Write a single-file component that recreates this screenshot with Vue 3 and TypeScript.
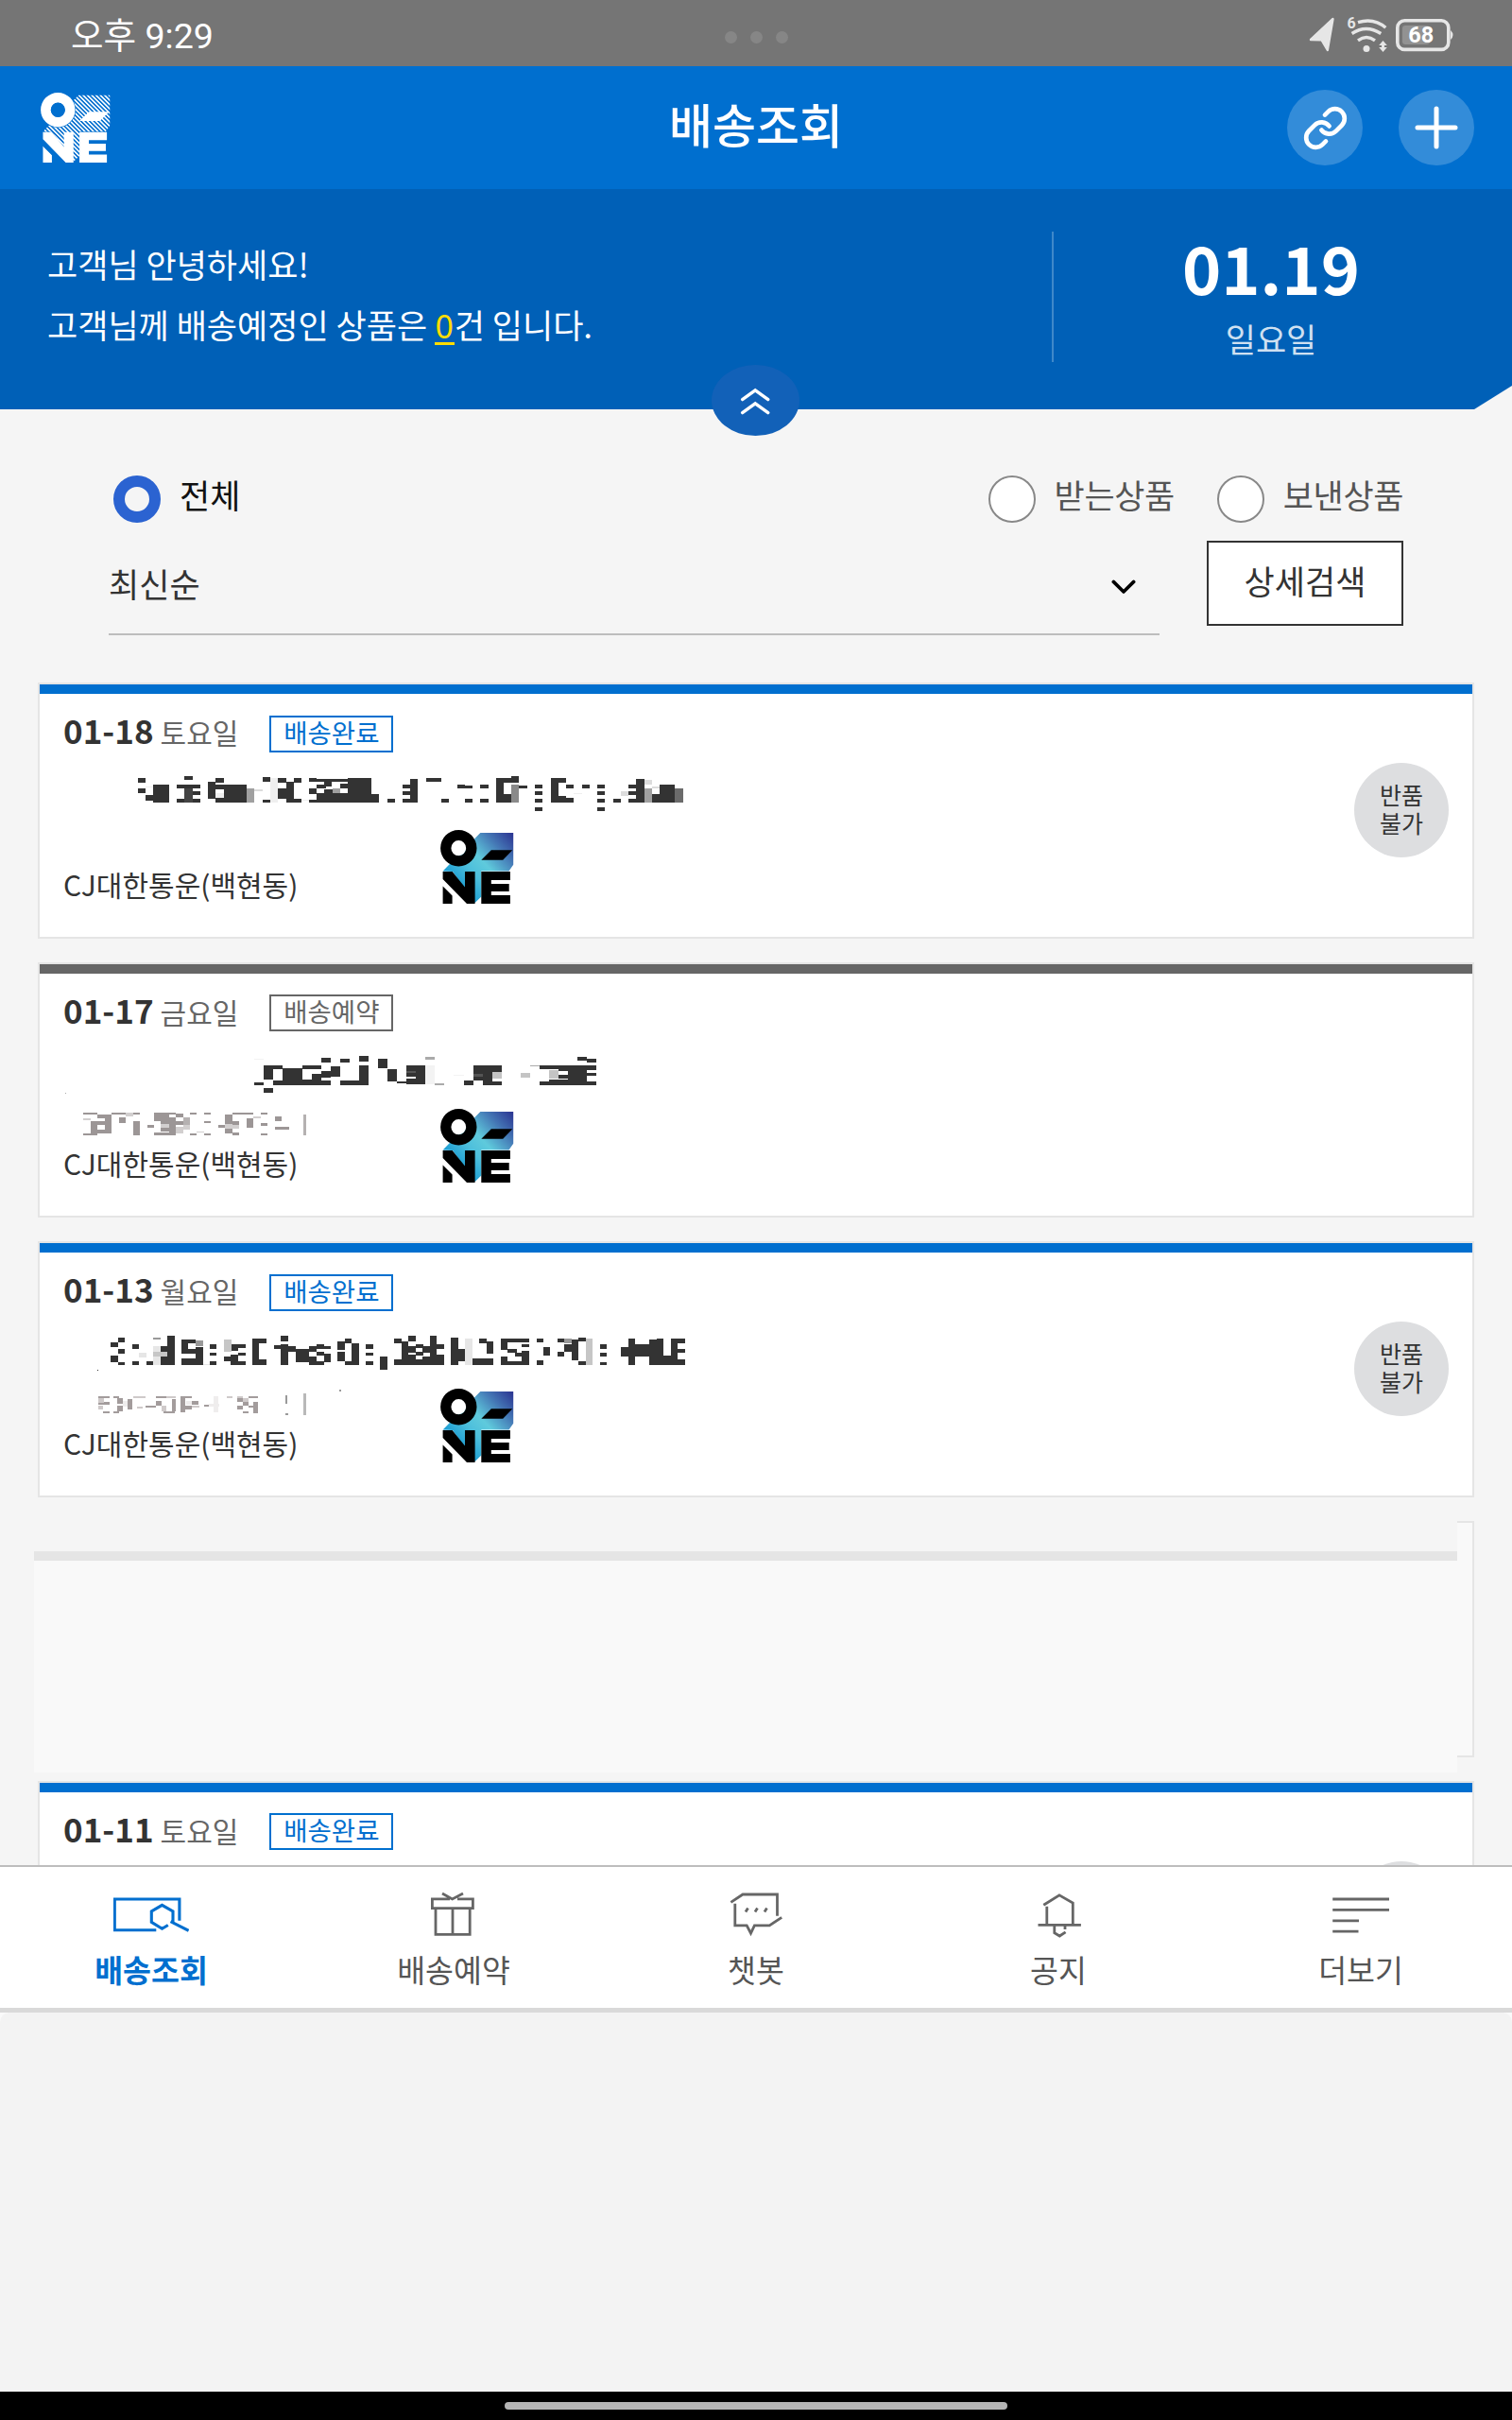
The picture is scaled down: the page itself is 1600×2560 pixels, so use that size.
<script setup lang="ts">
interface Shade {
  fill: string
  rects: number[][]
}
interface Mosaic {
  viewBox: string
  shades: Shade[]
}
interface Parcel {
  date: string
  weekday: string
  status: string
  tone: 'done' | 'booked'
  height: number
  carrier?: string
  noReturn?: string[]
  title?: Mosaic
  serial?: Mosaic
  blank?: boolean
  raised?: boolean
}

const CARRIER = 'CJ대한통운(백현동)'

const toPath = (rects: number[][]): string =>
  rects.map(([x, y, w, h]) => `M${x} ${y}h${w}v${h}h${-w}z`).join('')

const titleA: Mosaic = {
  viewBox: '77.35 321 1379.9 141',
  shades: [
    { fill: '#333', rects: [
      [243,339,16,14],[243,372,16,14],[259,393,18,19],[276,361,36,21],[276,381,36,36],[345,332,19,14],[328,359,53,13],[364,381,17,12],[364,405,17,12],[328,405,17,12],
      [397,352,17,53],[414,339,19,14],[414,359,19,16],[433,359,50,58],[414,402,19,15],[518,337,17,15],[518,407,17,10],[552,340,18,14],[552,372,18,33],[570,352,17,65],[587,339,17,15],[587,405,17,12],
      [621,339,17,13],[638,342,69,9],[621,372,17,18],[638,359,20,13],[655,349,17,16],[621,407,17,10],[638,388,37,29],[655,375,18,20],[690,357,17,15],[673,388,34,29],[707,339,52,78],[759,390,17,27],
      [794,405,17,12],[828,359,17,13],[845,342,17,75],[828,381,17,12],[828,405,17,12],[880,339,34,12],[914,405,17,12],[949,359,17,12],[966,364,17,8],[966,405,17,12],[999,359,19,13],[999,405,19,12],
      [1035,340,17,77],[1052,340,34,13],[1068,332,18,10],[1052,390,16,27],[1086,364,18,8],[1121,359,16,12],[1121,381,16,12],[1121,405,16,12],[1121,432,16,12],
      [1156,339,17,78],[1173,339,17,14],[1173,395,17,22],[1190,359,17,13],[1190,402,16,15],[1225,361,17,10],[1259,359,16,12],[1259,381,16,12],[1259,405,16,12],[1259,432,16,12],[1294,405,17,12],
      [1328,361,17,12],[1328,381,17,12],[1328,405,17,12],[1345,342,18,75],[1380,390,17,27],[1397,361,33,56] ] },
    { fill: '#444', rects: [[345,372,19,45]] },
    { fill: '#6b6b6b', rects: [[1430,372,19,45]] },
    { fill: '#8a8a8a', rects: [[1068,360,18,57]] },
    { fill: '#a0a0a0', rects: [[483,373,17,44],[673,372,17,16],[1363,372,17,45]] },
    { fill: '#dcdcdc', rects: [[500,374,18,8],[1311,381,17,14],[1363,345,17,16],[1380,366,17,6]] },
    { fill: '#efefef', rects: [[535,340,17,77],[414,387,19,15],[259,367,17,2],[604,409,17,2],[1206,387,19,2]] },
  ],
}
const titleB: Mosaic = {
  viewBox: '77.35 309 1379.9 141',
  shades: [
    { fill: '#333', rects: [
      [500,405,21,8],[521,350,20,45],[521,424,20,14],[541,350,21,13],[541,400,21,14],[562,359,44,55],[606,350,42,14],[606,395,21,19],[627,378,21,36],[648,328,21,13],[648,368,21,22],[648,400,21,14],
      [669,355,21,33],[690,330,21,13],[690,400,42,14],[732,321,21,17],[732,350,21,64],[774,330,20,30],[794,362,21,40],[815,402,21,6],[836,352,42,16],[836,376,42,12],[836,392,42,20],[857,352,21,60],
      [964,400,21,14],[985,352,62,26],[985,386,21,14],[1006,378,20,36],[1026,402,21,12],[1131,352,42,10],[1131,402,42,12],[1173,352,21,17],[1173,380,21,12],[1152,396,42,18],[1194,350,42,64],
      [1215,324,21,11],[1236,330,20,11],[1236,352,20,13],[1236,374,20,11],[1236,402,20,12] ] },
    { fill: '#555', rects: [[985,378,21,8],[836,368,21,8]] },
    { fill: '#aaa', rects: [[878,324,21,9],[899,407,21,6],[1110,350,21,4],[82,438,2,3]] },
    { fill: '#c4c4c4', rects: [[1089,375,21,14],[1152,366,21,26],[1026,372,21,20]] },
    { fill: '#f3f3f3', rects: [[878,350,21,62],[941,381,23,3],[500,330,21,3]] },
  ],
}
const serialB: Mosaic = {
  viewBox: '77.35 474 627.2 108',
  shades: [
    { fill: '#9c9696', rects: [
      [121,500,32,7],[153,508,32,10],[137,527,16,13],[169,518,16,50],[121,566,16,7],[137,540,16,33],[153,527,16,14],[153,556,16,10],[185,500,30,7],[201,515,14,20],[232,500,15,7],[232,527,15,46],
      [263,541,15,8],[278,500,48,8],[278,508,15,20],[293,508,18,28],[311,515,15,24],[278,563,33,10],[293,550,18,10],[311,541,15,32],[326,505,16,10],[326,528,16,12],[357,500,15,7],[357,566,15,7],[388,500,15,7],[388,527,15,8],[388,566,15,7],
      [420,541,15,9],[435,508,16,30],[435,552,16,14],[451,500,15,8],[451,527,15,12],[451,563,15,10],[466,500,32,7],[483,520,15,30],[514,500,15,7],[514,534,15,8],[514,566,15,7],[546,514,15,14],[546,546,31,8] ] },
    { fill: '#d2cfcf', rects: [[121,520,16,6],[215,500,17,14],[293,538,18,12],[326,545,16,22],[342,540,15,16],[435,538,16,14],[451,541,15,12],[498,514,16,5],[372,561,16,3]] },
    { fill: '#b5b1b1', rects: [[342,515,15,24],[608,507,7,66]] },
  ],
}
const titleC: Mosaic = {
  viewBox: '77.35 324 1379.9 141',
  shades: [
    { fill: '#333', rects: [
      [182,359,17,17],[182,402,17,20],[199,345,14,15],[199,380,14,15],[199,422,14,10],[230,366,15,15],[230,420,15,12],[261,420,16,12],[293,372,17,60],[307,339,17,93],[339,350,15,45],[354,350,17,14],[371,375,15,57],[354,382,17,13],[339,412,32,20],
      [401,366,16,14],[401,393,16,10],[401,420,16,12],[448,366,17,20],[433,405,17,15],[448,400,17,32],[465,366,16,12],[465,393,16,10],[465,420,16,12],[495,348,16,84],[511,348,16,16],[511,415,16,17],
      [544,370,14,12],[558,339,17,18],[558,366,17,66],[575,373,16,18],[591,380,30,42],[621,373,17,18],[621,405,17,27],[638,366,16,14],[654,372,15,10],[638,390,16,12],[654,395,15,27],[638,420,16,12],
      [684,357,16,26],[684,391,16,28],[700,348,16,14],[716,362,16,70],[700,420,16,12],[746,366,17,14],[746,393,17,10],[746,420,17,12],[778,405,16,42],
      [809,348,16,14],[825,357,15,75],[809,415,16,17],[840,339,17,18],[840,372,17,20],[840,400,17,32],[857,366,17,12],[857,390,17,12],[857,415,17,17],[889,339,15,93],[872,372,17,20],[872,405,17,27],[904,366,15,14],[904,398,15,34],
      [935,345,16,87],[951,380,14,40],[983,412,46,20],[1013,357,16,38],[998,348,16,14],[1045,348,16,36],[1061,348,47,13],[1061,380,20,12],[1077,392,15,12],[1092,388,16,44],[1045,405,16,27],[1061,420,31,12],[1092,366,16,10],
      [1124,348,15,12],[1124,418,15,14],[1139,375,15,28],[1171,348,15,12],[1186,366,16,24],[1202,352,15,66],[1217,345,16,12],[1217,420,16,12],[1171,390,15,14],[1264,366,16,14],[1264,393,16,12],[1264,422,16,10],
      [1311,376,17,28],[1328,348,14,84],[1342,366,32,38],[1374,352,16,80],[1390,348,16,84],[1406,402,28,30],[1421,348,15,84],[1436,348,17,14],[1436,380,17,14],[1436,415,17,17],[152,447,3,3] ] },
    { fill: '#999', rects: [[276,345,17,7],[371,355,15,18],[1186,348,16,14]] },
    { fill: '#c6c6c6', rects: [[433,350,17,40],[1233,348,15,84],[276,390,31,16]] },
    { fill: '#e6e6e6', rects: [[276,372,17,18],[276,406,17,26],[245,393,16,15],[966,348,17,84],[386,428,15,3]] },
  ],
}
const serialC: Mosaic = {
  viewBox: '77.35 489 627.2 108',
  shades: [
    { fill: '#a39c9c', rects: [
      [155,531,25,7],[155,550,25,8],[197,538,12,18],[197,560,12,18],[188,531,12,7],[165,578,14,6],[188,578,12,6],[220,540,11,32],[260,560,22,7],[282,531,24,6],[282,546,12,14],[318,540,9,38],[300,578,25,6],
      [337,531,10,52],[347,531,15,7],[347,560,15,12],[362,545,14,12],[388,558,11,6],[463,538,12,12],[463,560,12,12],[475,550,12,10],[475,578,12,6],[487,531,20,7],[497,550,10,34],[487,560,10,8] ] },
    { fill: '#cfcaca', rects: [[155,538,12,14],[155,562,10,12],[232,531,28,6],[240,565,12,6],[294,560,12,18],[306,531,20,7],[362,560,16,8],[438,531,14,6],[463,531,12,6],[475,538,12,10]] },
    { fill: '#efeded', rects: [[410,531,10,50],[400,556,22,8],[350,545,12,12],[209,545,10,20]] },
    { fill: '#9a9a9a', rects: [[569,528,3,28],[568,584,6,6],[687,510,6,5]] },
    { fill: '#b9b9b9', rects: [[608,522,7,68]] },
  ],
}

const parcels: Parcel[] = [
  { date: '01-18', weekday: '토요일', status: '배송완료', tone: 'done', height: 271, carrier: CARRIER, noReturn: ['반품', '불가'], title: titleA },
  { date: '01-17', weekday: '금요일', status: '배송예약', tone: 'booked', height: 270, carrier: CARRIER, title: titleB, serial: serialB, raised: true },
  { date: '01-13', weekday: '월요일', status: '배송완료', tone: 'done', height: 271, carrier: CARRIER, noReturn: ['반품', '불가'], title: titleC, serial: serialC },
  { date: '', weekday: '', status: '', tone: 'done', height: 250, blank: true },
  { date: '01-11', weekday: '토요일', status: '배송완료', tone: 'done', height: 271, noReturn: [], raised: true },
]

const tabs = [
  { label: '배송조회', active: true, viewBox: '120 2000 80 50',
    d: 'M189.9 2031.7V2009H121.3V2041.7H165.3M177.8 2036.5L171.5 2040.3L160.3 2033.3V2022L171.5 2015.3L183 2022V2033.5M180.5 2032.7L199.6 2042.3' },
  { label: '배송예약', active: false, viewBox: '440 2000 80 50',
    d: 'M468 2003L478.6 2009L490 2003M484 2008.8H500.4V2018.6H457.4V2008.8H476M461 2018.6V2046.4H497.2V2018.6M479 2018.6V2046.4' },
  { label: '챗봇', active: false, viewBox: '760 2000 80 50',
    d: 'M773.4 2012.3L786 2004H822.5V2026.7M827.2 2028.3L814.3 2036.8H798.4L794.5 2045L790.2 2036.8H777.8V2013.7M789 2022.5L791.5 2018.5M799 2022.5L801.5 2018.5M809 2022.5L811.5 2018.5' },
  { label: '공지', active: false, viewBox: '1080 2000 80 50',
    d: 'M1104.3 2015.3L1121 2004.9L1135.3 2013V2036M1107.8 2016.7V2036M1098.5 2036.3H1143.9M1115.8 2037V2044.7L1121.3 2048L1127.6 2043.8M1127 2037V2041' },
  { label: '더보기', active: false, viewBox: '1400 2000 80 50',
    d: 'M1410.2 2009H1470M1410.2 2020.3H1470M1410.2 2031.8H1438M1410.2 2043.2H1437.5' },
]
</script>

<template>
  <div class="screen">
    <svg class="defs" width="0" height="0">
      <defs>
        <linearGradient id="oneTint" gradientUnits="userSpaceOnUse" x1="77" y1="3" x2="12" y2="62">
          <stop offset="0" stop-color="#2b3391" />
          <stop offset=".25" stop-color="#4579b6" />
          <stop offset=".5" stop-color="#5fcadc" />
          <stop offset=".68" stop-color="#4dbfdc" />
          <stop offset="1" stop-color="#0b92d0" />
        </linearGradient>
        <pattern id="oneHatch" width="3.4" height="3.4" patternUnits="userSpaceOnUse" patternTransform="rotate(-45)">
          <rect width="1.7" height="3.4" fill="#fff" />
        </pattern>
        <symbol id="oneShadow" viewBox="0 0 78 78">
          <path d="M2.6 43.5L42.3 3H77.2V36.7L72.5 43.6H43.3V70.5L36.6 77L13 44Z" />
        </symbol>
        <symbol id="oneMark" viewBox="0 0 78 78">
          <path fill-rule="evenodd" d="M19.3 0A19.2 19.2 0 0 1 19.3 38.4A19.2 19.2 0 0 1 19.3 0ZM19.3 11.1A7.9 8.1 0 0 0 19.3 27.3A7.9 8.1 0 0 0 19.3 11.1Z" />
          <path d="M53.8 21.3H76.3L66.2 31.7H43.3Z" />
          <path d="M2.6 44H12.6L26 60.5V44H36.6V78H28L2.6 52ZM2.6 59.5L12.6 69.5V78H2.6Z" />
          <path d="M43.3 44H73.9V53H53.8V57H72.7V65H53.8V69H73.9V78H43.3Z" />
        </symbol>
      </defs>
    </svg>

    <header class="status">
      <span class="clock">오후 9:29</span>
      <span class="dots"><i /><i /><i /></span>
      <svg class="sys" width="160" height="50" viewBox="1380 10 160 50">
        <path d="M1410.5 18L1404.8 51L1398.6 40.4L1387 40Z" fill="#e6e6e6" stroke="#e6e6e6" stroke-width="2.4" stroke-linejoin="round" />
        <text x="1425.4" y="28.4" class="six">6</text>
        <g fill="none" stroke="#e6e6e6" stroke-width="3.4">
          <path d="M1437 21.6Q1454 16.5 1466.3 27.3" />
          <path d="M1430.6 33.5Q1445.5 23.5 1461.3 33.5" />
          <path d="M1437 40.8Q1446 34.3 1455 40.8" />
        </g>
        <circle cx="1446" cy="49.4" r="3.5" fill="#e6e6e6" />
        <path d="M1463.5 41L1467.8 46H1465V48H1467.8L1463.5 53L1459.2 48H1462V46H1459.2Z" fill="#e6e6e6" />
        <rect x="1478.8" y="19.8" width="54" height="30.6" rx="7.5" fill="none" stroke="#e6e6e6" stroke-width="3.6" />
        <path d="M1535 30Q1540 35 1535 40Z" fill="#e6e6e6" />
        <rect x="1484" y="25" width="29" height="20" rx="3" fill="#929292" />
        <text x="1503.8" y="43.2" class="pct" text-anchor="middle">68</text>
      </svg>
    </header>

    <div class="appbar">
      <svg class="brand" width="74" height="74" viewBox="0 0 78 78">
        <use href="#oneShadow" fill="url(#oneHatch)" />
        <circle cx="19.3" cy="19.2" r="19.8" fill="#006fcf" />
        <use href="#oneMark" fill="#fff" />
        <circle cx="19.3" cy="19.2" r="7.9" fill="#006fcf" />
        <path d="M2.6 52.8L27.5 78H12.6V69.5L2.6 59.5Z" fill="#006fcf" />
      </svg>
      <h1>배송조회</h1>
      <div class="actions">
        <span class="round">
          <svg width="49" height="49" viewBox="0 0 24 24" fill="none" stroke="#fff" stroke-width="2.3" stroke-linecap="round">
            <path d="M10 13a5 5 0 0 0 7.54.54l3-3a5 5 0 0 0-7.07-7.07l-1.72 1.71" />
            <path d="M14 11a5 5 0 0 0-7.54-.54l-3 3a5 5 0 0 0 7.07 7.07l1.71-1.71" />
          </svg>
        </span>
        <span class="round">
          <svg width="46" height="46" viewBox="0 0 46 46" stroke="#fff" stroke-width="5" stroke-linecap="round">
            <path d="M23 3V43M3 23H43" />
          </svg>
        </span>
      </div>
    </div>

    <section class="hero">
      <div class="panel">
        <div class="greet">
          <p>고객님 안녕하세요!</p>
          <p>고객님께 배송예정인 상품은 <b>0</b>건 입니다.</p>
        </div>
        <div class="today">
          <strong>01.19</strong>
          <span>일요일</span>
        </div>
      </div>
      <span class="fold">
        <svg width="34" height="30" viewBox="782 410 34 30" fill="none" stroke="#fff" stroke-width="3.4" stroke-linecap="round">
          <path d="M785.6 422.6L799.2 412.8L812.8 422.6M785.6 436.6L799.2 426.8L812.8 436.6" />
        </svg>
      </span>
    </section>

    <section class="filters">
      <div class="radios">
        <label class="opt on"><i />전체</label>
        <label class="opt push"><i />받는상품</label>
        <label class="opt"><i />보낸상품</label>
      </div>
      <div class="row">
        <div class="select">
          <span>최신순</span>
          <svg width="26" height="16" viewBox="0 0 26 16" fill="none" stroke="#000" stroke-width="3.6" stroke-linecap="round" stroke-linejoin="round">
            <path d="M2.3 2.4L13 13L23.7 2.4" />
          </svg>
        </div>
        <button type="button" class="detail">상세검색</button>
      </div>
    </section>

    <main class="list">
      <article
        v-for="(p, i) in parcels"
        :key="i"
        class="card"
        :class="[p.tone, { blank: p.blank, raised: p.raised }]"
        :style="{ height: p.height + 'px' }"
      >
        <template v-if="!p.blank">
          <div class="head">
            <span class="date">{{ p.date }}</span>
            <span class="weekday">{{ p.weekday }}</span>
            <span class="badge">{{ p.status }}</span>
          </div>
          <svg v-if="p.title" class="title" width="660" height="47" :viewBox="p.title.viewBox" preserveAspectRatio="none" shape-rendering="crispEdges">
            <path v-for="s in p.title.shades" :key="s.fill" :fill="s.fill" :d="toPath(s.rects)" />
          </svg>
          <div v-if="p.carrier" class="foot">
            <div class="info">
              <div class="serial">
                <svg v-if="p.serial" width="300" height="36" :viewBox="p.serial.viewBox" preserveAspectRatio="none" shape-rendering="crispEdges">
                  <path v-for="s in p.serial.shades" :key="s.fill" :fill="s.fill" :d="toPath(s.rects)" />
                </svg>
              </div>
              <div class="carrier">{{ p.carrier }}</div>
            </div>
            <svg class="mark" width="78" height="78" viewBox="0 0 78 78">
              <use href="#oneShadow" fill="url(#oneTint)" />
              <circle cx="19.3" cy="19.2" r="8" fill="#fff" />
              <path d="M2.6 52L28 78H12.6V69.5L2.6 59.5Z" fill="#fff" />
              <use href="#oneMark" />
            </svg>
          </div>
          <span v-if="p.noReturn" class="noreturn">
            <span v-for="line in p.noReturn" :key="line">{{ line }}</span>
          </span>
        </template>
        <div v-else class="veil"><i /></div>
      </article>
    </main>

    <nav class="tabs">
      <div v-for="t in tabs" :key="t.label" class="tab" :class="{ active: t.active }">
        <svg width="80" height="50" :viewBox="t.viewBox" fill="none">
          <path :d="t.d" />
        </svg>
        <span>{{ t.label }}</span>
      </div>
    </nav>

    <div class="under"><div class="sheet" /></div>
    <footer class="gesture"><i /></footer>
  </div>
</template>

<style>
body {
  background: #f5f5f5;
}
</style>

<style scoped>
.screen {
  width: 1600px;
  height: 2560px;
  display: flex;
  flex-direction: column;
  overflow: hidden;
  background: #f5f5f5;
  color: #333;
  font-family: "Noto Sans CJK KR", "Noto Sans", sans-serif;
  font-size: 35px;
}
.defs {
  position: absolute;
}
.status {
  flex: none;
  height: 70px;
  box-sizing: border-box;
  padding: 0 60px 0 75px;
  background: #757575;
  color: #fff;
  display: grid;
  grid-template-columns: 1fr auto 1fr;
  align-items: center;
}
.clock {
  font-family: Roboto, "Noto Sans CJK KR", sans-serif;
  font-size: 37.6px;
  line-height: 70px;
  padding-top: 3px;
}
.dots {
  display: flex;
  gap: 14px;
  margin: 5px 15px 0 0;
}
.dots i {
  width: 13px;
  height: 13px;
  border-radius: 50%;
  background: #868686;
}
.sys {
  justify-self: end;
}
.six {
  font: 700 16px Roboto, sans-serif;
  fill: #e6e6e6;
}
.pct {
  font: 700 23.5px Roboto, sans-serif;
  fill: #fff;
}
.appbar {
  flex: none;
  height: 130px;
  box-sizing: border-box;
  padding: 0 40px 0 43px;
  background: #006fcf;
  color: #fff;
  display: grid;
  grid-template-columns: 198px 1fr 201px;
}
.brand {
  margin-top: 28px;
}
h1 {
  margin: 0;
  text-align: center;
  font-size: 50px;
  font-weight: 500;
  line-height: 120px;
}
.actions {
  display: flex;
  justify-content: flex-end;
  align-items: center;
  gap: 38px;
}
.round {
  width: 80px;
  height: 80px;
  border-radius: 50%;
  background: #338cd9;
  display: flex;
  align-items: center;
  justify-content: center;
}
.hero {
  flex: none;
  position: relative;
  height: 233px;
}
.panel {
  height: 233px;
  background: #0060b7;
  color: #fff;
  clip-path: polygon(0 0, 100% 0, 100% 208px, 1560px 100%, 0 100%);
  display: flex;
  justify-content: space-between;
  box-sizing: border-box;
  padding: 45px 25px 0 50px;
}
.greet {
  padding-top: 2px;
}
.greet p {
  margin: 0;
  line-height: 64px;
}
.greet b {
  display: inline-block;
  font-weight: 400;
  line-height: 40px;
  height: 39px;
  padding: 0 0.7px;
  color: #fd0;
  border-bottom: 3px solid #fd0;
  vertical-align: baseline;
}
.today {
  width: 460px;
  height: 138px;
  border-left: 2px solid #3f88c9;
  display: flex;
  flex-direction: column;
  align-items: center;
}
.today strong {
  font-size: 70px;
  font-weight: 700;
  line-height: 73px;
}
.today span {
  line-height: 80px;
  color: #cfe0f1;
}
.fold {
  position: absolute;
  left: 753px;
  top: 186px;
  width: 93px;
  height: 75px;
  border-radius: 50%;
  background: #1261b8;
}
.fold svg {
  display: block;
  margin: 24px 0 0 29px;
}
.filters {
  flex: none;
  height: 289px;
  box-sizing: border-box;
  padding: 70px 115px 0;
}
.radios {
  display: flex;
  height: 50px;
}
.opt {
  display: flex;
  gap: 20px;
  line-height: 40px;
  color: #555;
}
.opt + .opt {
  margin-left: 45px;
  letter-spacing: -0.4px;
}
.opt.opt.push {
  margin-left: auto;
}
.opt i {
  width: 50px;
  height: 50px;
  box-sizing: border-box;
  border: 2px solid #888;
  border-radius: 50%;
  background: #fff;
}
.opt.on {
  margin-left: 5px;
  color: #111;
}
.opt.on i {
  border: 12.5px solid #2b63d1;
  background: #f5f5f5;
}
.row {
  margin-top: 19px;
  display: flex;
  justify-content: space-between;
  align-items: flex-start;
}
.select {
  width: 1112px;
  height: 100px;
  box-sizing: border-box;
  border-bottom: 2px solid #bdbdbd;
  padding-right: 25px;
  display: flex;
  justify-content: space-between;
  line-height: 90px;
}
.select svg {
  margin-top: 41px;
}
.detail {
  width: 208px;
  height: 90px;
  box-sizing: border-box;
  border: 2px solid #333;
  background: #fff;
  color: #333;
  font: inherit;
  line-height: 80px;
  padding: 0 0 6px;
}
.list {
  flex: none;
  height: 1251px;
  overflow: hidden;
  display: flex;
  flex-direction: column;
  gap: 25px;
  padding: 0 40px;
}
.card {
  flex: none;
  position: relative;
  box-sizing: border-box;
  border: 2px solid #e5e5e5;
  background: #fff;
  padding-left: 25px;
}
.card::before {
  content: "";
  display: block;
  height: 10px;
  margin-left: -25px;
  background: #006fcf;
}
.card.booked::before {
  background: #666;
}
.head {
  display: flex;
  align-items: flex-start;
  height: 65px;
  padding-top: 18px;
}
.date {
  font-weight: 700;
  line-height: 40px;
}
.weekday {
  margin-left: 7px;
  font-size: 30px;
  line-height: 45px;
  color: #666;
}
.badge {
  box-sizing: border-box;
  width: 131px;
  height: 39px;
  margin: 5px 0 0 33px;
  border: 2px solid #006fcf;
  color: #006fcf;
  font-size: 27.5px;
  line-height: 31px;
  text-align: center;
}
.raised .badge {
  margin-top: 4px;
}
.booked .badge {
  border-color: #666;
  color: #666;
}
.title {
  display: block;
}
.foot {
  display: flex;
  align-items: flex-start;
}
.info {
  width: 399px;
  padding-top: 8px;
}
.serial {
  height: 36px;
}
.serial svg {
  display: block;
}
.carrier {
  margin-top: 5px;
  font-size: 30px;
  line-height: 44px;
}
.raised .carrier {
  margin-top: 4px;
}
.mark {
  margin-top: 14px;
}
.raised .mark {
  margin-top: 13px;
}
.noreturn {
  position: absolute;
  top: 83px;
  right: 25px;
  width: 100px;
  height: 100px;
  box-sizing: border-box;
  padding-top: 18px;
  border-radius: 50%;
  background: #dddee0;
  font-size: 25px;
  line-height: 30px;
  text-align: center;
}
.noreturn span {
  display: block;
}
.blank {
  background: #f9f9f9;
}
.blank::before {
  display: none;
}
.veil {
  position: absolute;
  left: -6px;
  top: -2px;
  width: 1506px;
  height: 266px;
  background: linear-gradient(#f5f5f5 32px, #f9f9f9 32px);
}
.veil i {
  display: block;
  height: 10px;
  margin-top: 32px;
  background: #e5e5e5;
}
.tabs {
  flex: none;
  height: 156px;
  box-sizing: border-box;
  border-top: 2px solid #bdbdbd;
  border-bottom: 5px solid #d9d9d9;
  background: #fff;
  display: flex;
}
.tab {
  flex: 1;
  display: flex;
  flex-direction: column;
  align-items: center;
  padding-top: 25px;
  font-size: 32.5px;
  line-height: 60px;
  color: #555;
}
.tab svg {
  stroke: #666;
  stroke-width: 2.8;
  margin-bottom: 3px;
}
.tab.active {
  color: #006fcf;
  font-weight: 700;
}
.tab.active svg {
  stroke: #006fcf;
  stroke-width: 3.1;
}
.under {
  flex: 1;
  background: #fafafa;
}
.sheet {
  height: 100%;
  background: #f3f3f3;
  border-radius: 10px 10px 0 0;
}
.gesture {
  flex: none;
  height: 30px;
  background: #000;
  display: flex;
  justify-content: center;
  align-items: center;
}
.gesture i {
  width: 532px;
  height: 8px;
  border-radius: 4px;
  background: #b4b4b4;
}
</style>
